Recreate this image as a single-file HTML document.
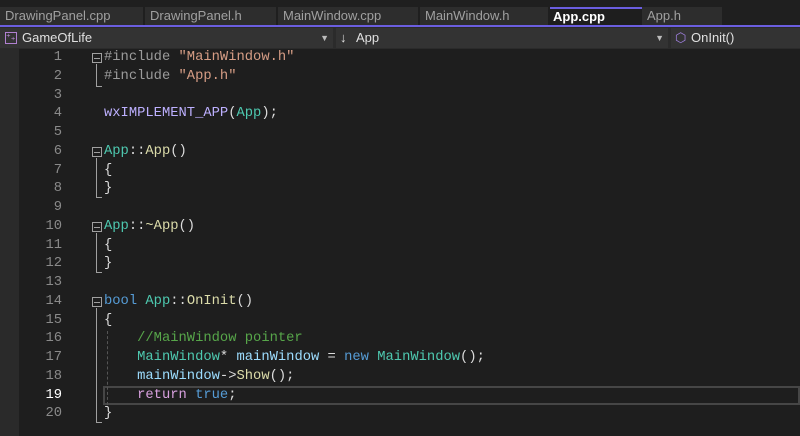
<!DOCTYPE html>
<html><head><style>
*{margin:0;padding:0;box-sizing:border-box}
body{width:800px;height:436px;background:#1e1e1e;overflow:hidden;position:relative;font-family:"Liberation Sans",sans-serif}
.top{position:absolute;left:0;top:0;width:800px;height:6px;background:#1f1f1f}
.tabbar{position:absolute;left:0;top:0;width:800px;height:26px;background:#1f1f1f}
.tab{position:absolute;top:7px;height:18px;background:#2d2d2d;color:#a0a0a0;font-size:13px;line-height:18px;padding-left:5px}
.purple{position:absolute;left:0;top:25px;width:800px;height:2px;background:#6b5ee0}
.bar{position:absolute;left:0;top:27px;width:800px;height:22px;background:#2b2b2b}
.dd{position:absolute;top:28px;height:20px;background:#333;color:#e0e0e0;font-size:13px;line-height:20px}
.gut{position:absolute;left:0;top:49px;width:19px;height:387px;background:#2a2a2a}
.ln{position:absolute;left:20px;width:42px;text-align:right;color:#8a8a8a;font-family:"Liberation Mono",monospace;font-size:13.8px;line-height:18.75px}
.code{position:absolute;left:104px;white-space:pre;font-family:"Liberation Mono",monospace;font-size:13.8px;line-height:18.75px;color:#dcdcdc}
.pp{color:#9b9b9b}.s{color:#d69d85}.m{color:#bdb0ff}.t{color:#4ec9b0}.f{color:#dcdcaa}.k{color:#569cd6}.r{color:#d8a0df}.v{color:#9cdcfe}.c{color:#57a64a}
.fold{position:absolute;left:92px;width:10px;height:10px;border:1px solid #a0a0a0}
.fold:after{content:"";position:absolute;left:1px;top:3.5px;width:6px;height:1px;background:#a0a0a0}
.vl{position:absolute;left:96px;width:1px;background:#a0a0a0}
.hl{position:absolute;left:96px;width:6px;height:1px;background:#a0a0a0}
</style></head><body>
<div class="tabbar"></div>
<div class="tab" style="left:0;width:143px">DrawingPanel.cpp</div>
<div class="tab" style="left:145px;width:131px">DrawingPanel.h</div>
<div class="tab" style="left:278px;width:140px">MainWindow.cpp</div>
<div class="tab" style="left:420px;width:128px">MainWindow.h</div>
<div class="tab" style="left:550px;width:92px;top:7px;background:#1e1e1e;color:#fff;font-weight:bold;border-top:2px solid #6b5ee0;line-height:16px;padding-left:3px">App.cpp <span style="font-weight:normal;color:#ccc;font-size:11px;margin-left:8px">⊣</span><span style="font-weight:normal;color:#ccc;margin-left:8px">✕</span></div>
<div class="tab" style="left:642px;width:80px">App.h</div>
<div class="purple"></div>
<div class="bar"></div>
<div class="dd" style="left:0;width:333px;padding-left:22px"><span style="position:absolute;left:5px;top:4px;width:12px;height:12px;border:1px solid #b080d0;color:#c090e0;font-size:9px;line-height:9px">⁺₊</span>GameOfLife<span style="position:absolute;right:4px;color:#bbb;font-size:9px">▼</span></div>
<div class="dd" style="left:336px;width:332px;padding-left:20px"><span style="position:absolute;left:4px">↓</span>App<span style="position:absolute;right:4px;color:#bbb;font-size:9px">▼</span></div>
<div class="dd" style="left:671px;width:129px;padding-left:20px"><span style="position:absolute;left:4px;color:#a080e0">⬡</span>OnInit()</div>
<div class="gut"></div>

<div class="ln" style="top:49px">1<br>2<br>3<br>4<br>5<br>6<br>7<br>8<br>9<br>10<br>11<br>12<br>13<br>14<br>15<br>16<br>17<br>18<br><span style="color:#fff">19</span><br>20</div>

<div style="position:absolute;left:103px;top:386px;width:697px;height:19px;border:2px solid #464646"></div>

<div class="fold" style="top:53px"></div><div class="vl" style="top:64px;height:22px"></div><div class="hl" style="top:86px"></div>
<div class="fold" style="top:147px"></div><div class="vl" style="top:158px;height:39px"></div><div class="hl" style="top:197px"></div>
<div class="fold" style="top:222px"></div><div class="vl" style="top:233px;height:39px"></div><div class="hl" style="top:272px"></div>
<div class="fold" style="top:297px"></div><div class="vl" style="top:308px;height:114px"></div><div class="hl" style="top:422px"></div>
<div style="position:absolute;left:107px;top:331px;height:74px;border-left:1px dashed #555"></div>

<div class="code" style="top:49px"><span class="pp">#include</span> <span class="s">"MainWindow.h"</span>
<span class="pp">#include</span> <span class="s">"App.h"</span>

<span class="m">wxIMPLEMENT_APP</span>(<span class="t">App</span>);

<span class="t">App</span>::<span class="f">App</span>()
{
}

<span class="t">App</span>::<span class="f">~App</span>()
{
}

<span class="k">bool</span> <span class="t">App</span>::<span class="f">OnInit</span>()
{
    <span class="c">//MainWindow pointer</span>
    <span class="t">MainWindow</span>* <span class="v">mainWindow</span> = <span class="k">new</span> <span class="t">MainWindow</span>();
    <span class="v">mainWindow</span>-&gt;<span class="f">Show</span>();
    <span class="r">return</span> <span class="k">true</span>;
}</div>
</body></html>
